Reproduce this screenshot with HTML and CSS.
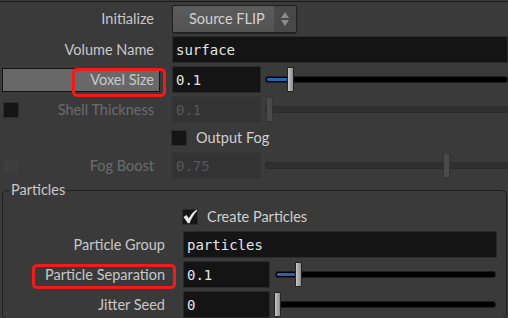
FILE: index.html
```html
<!DOCTYPE html>
<html lang="en">
<head>
    <meta charset="UTF-8">
    <title>Particle Fluid Surface</title>
    <link rel="stylesheet" href="styles.css">
</head>
<body>
    <div class="panel">
        <div class="rows">
            <!-- Initialize -->
            <div class="row row-menu">
                <div class="lbl">Initialize</div>
                <div class="menu">
                    <span class="menu-text">Source FLIP</span>
                    <span class="menu-arrows">
                        <svg width="10" height="16" viewBox="0 0 10 16">
                            <polygon points="5,1 9,7 1,7" fill="#8a8a8a"/>
                            <polygon points="1,9 9,9 5,15" fill="#8a8a8a"/>
                        </svg>
                    </span>
                </div>
            </div>

            <div class="row">
                <div class="lbl">Volume Name</div>
                <div class="field wide">surface</div>
            </div>

            <div class="row">
                <div class="lbl pressed"><span class="mark mark-voxel">Voxel Size</span></div>
                <div class="field num">0.1</div>
                <div class="slider">
                    <div class="track"><div class="fill" style="width: 20px;"></div></div>
                    <div class="handle" style="left: 22px;"></div>
                </div>
            </div>

            <div class="row off">
                <div class="lbl"><span class="check on"></span>Shell Thickness</div>
                <div class="field num">0.1</div>
                <div class="slider">
                    <div class="track"></div>
                    <div class="handle" style="left: 1px;"></div>
                </div>
            </div>

            <div class="row row-short">
                <div class="lbl"></div>
                <span class="check toggle"></span>
                <span class="toggle-text">Output Fog</span>
            </div>

            <div class="row off">
                <div class="lbl"><span class="check"></span>Fog Boost</div>
                <div class="field num">0.75</div>
                <div class="slider">
                    <div class="track"></div>
                    <div class="handle" style="left: 178px;"></div>
                </div>
            </div>
        </div>

        <!-- Particles folder -->
        <fieldset class="group">
            <legend>Particles</legend>
            <div class="rows">
                <div class="row row-short">
                    <div class="lbl"></div>
                    <span class="check toggle">
                        <svg width="15" height="15" viewBox="0 0 14 14">
                            <path d="M0.5 7.5 L3.5 5.5 L5.8 8.8 C7.8 5.2 10.3 2.2 13.8 0 L13.8 1.8 C10.8 4.8 8.6 8.6 6.6 13.8 L4.8 13.8 Z" fill="#e6e6e6"/>
                        </svg>
                    </span>
                    <span class="toggle-text">Create Particles</span>
                </div>

                <div class="row">
                    <div class="lbl">Particle Group</div>
                    <div class="field wide">particles</div>
                </div>

                <div class="row">
                    <div class="lbl"><span class="mark mark-sep">Particle Separation</span></div>
                    <div class="field num">0.1</div>
                    <div class="slider">
                        <div class="track"><div class="fill" style="width: 18px;"></div></div>
                        <div class="handle" style="left: 20px;"></div>
                    </div>
                </div>

                <div class="row">
                    <div class="lbl">Jitter Seed</div>
                    <div class="field num">0</div>
                    <div class="slider">
                        <div class="track"></div>
                        <div class="handle" style="left: -1px;"></div>
                    </div>
                </div>
            </div>
        </fieldset>
    </div>
</body>
</html>
```

FILE: styles.css
```css
body {
    margin: 0;
    height: 318px;
    overflow: hidden;
    background-color: #3a3a3a;
    font-family: Lato, "Noto Sans", sans-serif;
    font-size: 14.5px;
    color: #c8c8c8;
}

.panel {
    margin-top: 1px;
    border-top: 1px solid #1b1b1b;
}

.rows {
    display: flex;
    flex-direction: column;
    gap: 3px;
    padding-top: 2px;
}

.row {
    display: flex;
    align-items: center;
    height: 27px;
}

.row-menu {
    height: 29px;
}

.row-short {
    height: 23px;
}

/* label column */
.lbl {
    flex: none;
    width: 158px;
    height: 24px;
    margin-left: 2px;
    margin-right: 12px;
    padding-right: 6px;
    box-sizing: border-box;
    display: flex;
    align-items: center;
    justify-content: flex-end;
    white-space: nowrap;
}

.lbl .check {
    margin-right: auto;
    margin-left: 1px;
}

.lbl.pressed {
    background-color: #686868;
    border: 1px solid #151515;
    padding-right: 5px;
}

/* red callouts */
.mark {
    position: relative;
    display: inline-block;
    line-height: 18px;
}

.mark::after {
    content: "";
    position: absolute;
    border: 3px solid #f01c1c;
    border-radius: 5px;
}

.mark-voxel::after {
    left: -18px;
    right: -12px;
    top: -3px;
    bottom: -8px;
}

.mark-sep::after {
    left: -13px;
    right: -11px;
    top: -2px;
    bottom: -5px;
}

/* menu button */
.menu {
    width: 125px;
    height: 28px;
    box-sizing: border-box;
    display: flex;
    border: 1px solid #202020;
    border-radius: 2px;
    background: linear-gradient(#5c5c5c, #535353);
    box-shadow: 0 1px 1px rgba(0, 0, 0, 0.4);
    color: #d2d2d2;
}

.menu-text {
    flex: 1;
    padding-left: 16px;
    display: flex;
    align-items: center;
}

.menu-arrows {
    width: 22px;
    background-color: #484848;
    display: flex;
    align-items: center;
    justify-content: center;
}

/* input fields */
.field {
    height: 27px;
    box-sizing: border-box;
    padding-left: 3px;
    display: flex;
    align-items: center;
    background-color: #141414;
    border: 1px solid #2b2b2b;
    font-family: "DejaVu Sans Mono", monospace;
    font-size: 14px;
    color: #e4e4e4;
}

.field.wide {
    flex: 1;
}

.field.num {
    width: 89px;
}

/* sliders */
.slider {
    flex: 1;
    position: relative;
    height: 27px;
    margin-left: 4px;
    display: flex;
    align-items: center;
}

.track {
    flex: 1;
    height: 7px;
    box-sizing: border-box;
    padding: 1px 1px;
    background-color: #000;
    border: 1px solid #1f1f1f;
    border-radius: 3px;
}

.fill {
    height: 3px;
    background-color: #2a62b0;
    border-radius: 1px;
}

.handle {
    position: absolute;
    top: 1px;
    width: 7px;
    height: 25px;
    box-sizing: border-box;
    border: 1px solid #242424;
    border-radius: 1px;
    background: linear-gradient(90deg, #c6c6c6, #8c8c8c);
}

/* check boxes */
.check {
    flex: none;
    width: 16px;
    height: 16px;
    box-sizing: border-box;
    background-color: #3e3e3e;
    border: 1px solid #3a3a3a;
    display: flex;
    align-items: center;
    justify-content: center;
}

.check.on,
.check.toggle {
    background-color: #151515;
    border-color: #2c2c2c;
}

.check.toggle {
    margin-left: -1px;
}

.toggle-text {
    margin-left: 9px;
    color: #d0d0d0;
}

/* disabled rows */
.off .lbl {
    color: #6c6c6c;
}

.off .field {
    background-color: #333333;
    border-color: #363636;
    color: #575757;
}

.off .track {
    background-color: #2f2f2f;
    border-color: #2b2b2b;
}

.off .handle {
    background: #4a4a4a;
    border-color: #343434;
}

/* Particles folder */
.group {
    margin: 2px 1px 0 2px;
    padding: 0 9px 0 0;
    border: 1px solid #1f1f1f;
    border-radius: 5px;
}

.group legend {
    margin-left: 6px;
    padding: 0 2px;
    line-height: 18px;
    color: #c8c8c8;
}

.group .rows {
    padding-top: 6px;
    gap: 3px;
}

.group .lbl {
    width: 168px;
    margin-left: 0;
}

.group .field.num {
    width: 87px;
}

.group .slider {
    margin-left: 5px;
    margin-right: 1px;
}
```
